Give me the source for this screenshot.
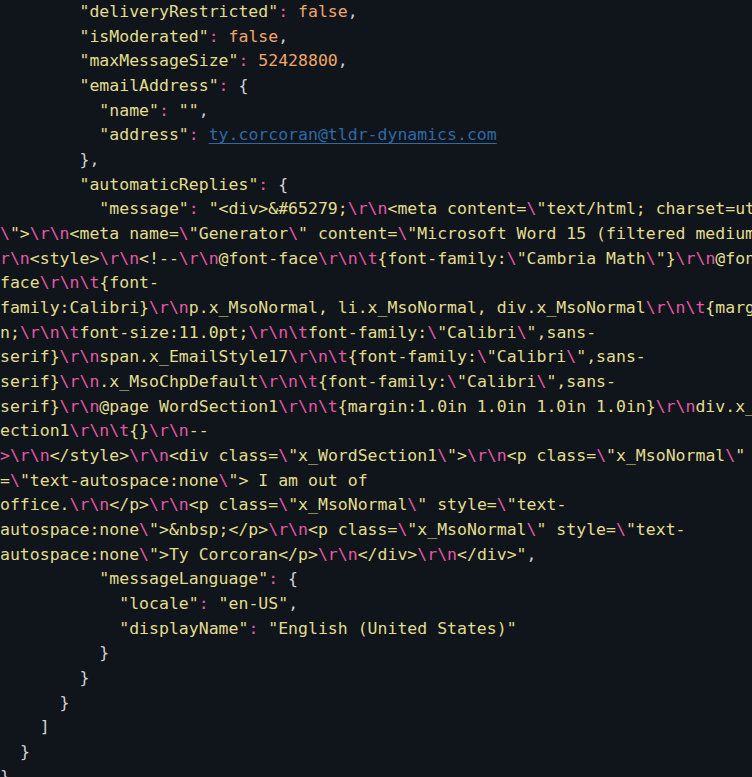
const YEL = "text-[#e2de8e]";
const PINK = "text-[#e35aa8]";
const ORANGE = "text-[#f0a66a]";
const PUNC = "text-[#cfd2d6]";
const LINK = "text-[#2f6aa6] underline decoration-[#2f6aa6] underline-offset-[3px]";

// split a string part into plain / escape pieces
function Str({ text }) {
    const parts = text.split(/(\\[rnt]|\\)/);
    return parts.map((p, i) =>
        p === "" ? null : (
            <span key={i} className={p.startsWith("\\") ? PINK : YEL}>
                {p}
            </span>
        )
    );
}

function Key({ name }) {
    return (
        <>
            <span className={YEL}>"{name}"</span>
            <span className={PINK}>:</span>{" "}
        </>
    );
}

function Row({ indent = 0, children }) {
    return (
        <div className="whitespace-pre overflow-hidden h-[24.68px]">
            {" ".repeat(indent)}
            {children}
        </div>
    );
}

export default function App() {
    return (
        <div
            className="w-[752px] h-[777px] overflow-hidden bg-[#10141b] text-[16.5px] leading-[24.68px]"
            style={{ fontFamily: '"DejaVu Sans Mono", "Liberation Mono", monospace' }}
        >
            <Row indent={8}>
                <Key name="deliveryRestricted" />
                <span className={ORANGE}>false</span>
                <span className={PUNC}>,</span>
            </Row>
            <Row indent={8}>
                <Key name="isModerated" />
                <span className={ORANGE}>false</span>
                <span className={PUNC}>,</span>
            </Row>
            <Row indent={8}>
                <Key name="maxMessageSize" />
                <span className={ORANGE}>52428800</span>
                <span className={PUNC}>,</span>
            </Row>
            <Row indent={8}>
                <Key name="emailAddress" />
                <span className={PUNC}>{"{"}</span>
            </Row>
            <Row indent={10}>
                <Key name="name" />
                <span className={YEL}>""</span>
                <span className={PUNC}>,</span>
            </Row>
            <Row indent={10}>
                <Key name="address" />
                <span className={LINK}>ty.corcoran@tldr-dynamics.com</span>
            </Row>
            <Row indent={8}>
                <span className={PUNC}>{"},"}</span>
            </Row>
            <Row indent={8}>
                <Key name="automaticReplies" />
                <span className={PUNC}>{"{"}</span>
            </Row>
            <Row indent={10}>
                <Key name="message" />
                <Str text={'"<div>&#65279;\\r\\n<meta content=\\"text/html; charset=utf-8\\">'} />
            </Row>
            <Row>
                <Str text={'\\">\\r\\n<meta name=\\"Generator\\" content=\\"Microsoft Word 15 (filtered medium)\\">'} />
            </Row>
            <Row>
                <span className={PINK}>r</span>
                <Str text={'\\n<style>\\r\\n<!--\\r\\n@font-face\\r\\n\\t{font-family:\\"Cambria Math\\"}\\r\\n@font-'} />
            </Row>
            <Row>
                <Str text={"face\\r\\n\\t{font-"} />
            </Row>
            <Row>
                <Str text={"family:Calibri}\\r\\np.x_MsoNormal, li.x_MsoNormal, div.x_MsoNormal\\r\\n\\t{margin:0in;"} />
            </Row>
            <Row>
                <Str text={'n;\\r\\n\\tfont-size:11.0pt;\\r\\n\\tfont-family:\\"Calibri\\",sans-'} />
            </Row>
            <Row>
                <Str text={'serif}\\r\\nspan.x_EmailStyle17\\r\\n\\t{font-family:\\"Calibri\\",sans-'} />
            </Row>
            <Row>
                <Str text={'serif}\\r\\n.x_MsoChpDefault\\r\\n\\t{font-family:\\"Calibri\\",sans-'} />
            </Row>
            <Row>
                <Str text={"serif}\\r\\n@page WordSection1\\r\\n\\t{margin:1.0in 1.0in 1.0in 1.0in}\\r\\ndiv.x_WordS"} />
            </Row>
            <Row>
                <Str text={"ection1\\r\\n\\t{}\\r\\n--"} />
            </Row>
            <Row>
                <span className={PINK}>&gt;</span>
                <Str text={'\\r\\n</style>\\r\\n<div class=\\"x_WordSection1\\">\\r\\n<p class=\\"x_MsoNormal\\" style'} />
            </Row>
            <Row>
                <Str text={'=\\"text-autospace:none\\"> I am out of'} />
            </Row>
            <Row>
                <Str text={'office.\\r\\n</p>\\r\\n<p class=\\"x_MsoNormal\\" style=\\"text-'} />
            </Row>
            <Row>
                <Str text={'autospace:none\\">&nbsp;</p>\\r\\n<p class=\\"x_MsoNormal\\" style=\\"text-'} />
            </Row>
            <Row>
                <Str text={'autospace:none\\">Ty Corcoran</p>\\r\\n</div>\\r\\n</div>"'} />
                <span className={PUNC}>,</span>
            </Row>
            <Row indent={10}>
                <Key name="messageLanguage" />
                <span className={PUNC}>{"{"}</span>
            </Row>
            <Row indent={12}>
                <Key name="locale" />
                <span className={YEL}>"en-US"</span>
                <span className={PUNC}>,</span>
            </Row>
            <Row indent={12}>
                <Key name="displayName" />
                <span className={YEL}>"English (United States)"</span>
            </Row>
            <Row indent={10}>
                <span className={PUNC}>{"}"}</span>
            </Row>
            <Row indent={8}>
                <span className={PUNC}>{"}"}</span>
            </Row>
            <Row indent={6}>
                <span className={PUNC}>{"}"}</span>
            </Row>
            <Row indent={4}>
                <span className={PUNC}>]</span>
            </Row>
            <Row indent={2}>
                <span className={PUNC}>{"}"}</span>
            </Row>
            <Row>
                <span className={PUNC}>{"}"}</span>
            </Row>
        </div>
    );
}
